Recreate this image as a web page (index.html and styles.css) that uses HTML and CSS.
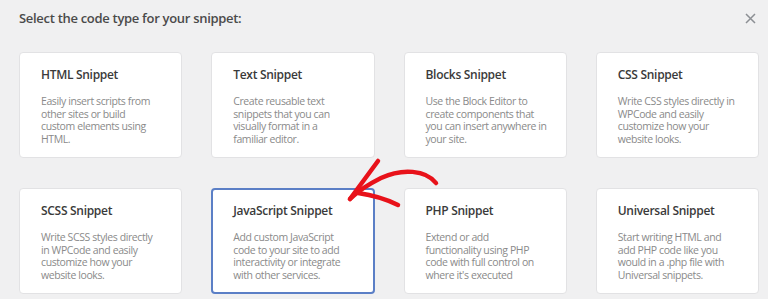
FILE: index.html
```html
<!DOCTYPE html>
<html lang="en">
<head>
  <meta charset="UTF-8">
  <title>Select snippet type</title>
  <link rel="stylesheet" href="styles.css">
</head>
<body>

<div class="modal">
  <div class="modal-header">
    <h2>Select the code type for your snippet:</h2>
    <button class="close" aria-label="Close">
      <svg width="11" height="11" viewBox="0 0 11 11"><path d="M1 1L10 10M10 1L1 10" stroke="#8c8f94" stroke-width="1.5" fill="none"/></svg>
    </button>
  </div>

  <div class="types">
    <div class="type">
      <h3>HTML Snippet</h3>
      <p>Easily insert scripts from<br>other sites or build<br>custom elements using<br>HTML.</p>
    </div>
    <div class="type">
      <h3>Text Snippet</h3>
      <p>Create reusable text<br>snippets that you can<br>visually format in a<br>familiar editor.</p>
    </div>
    <div class="type">
      <h3>Blocks Snippet</h3>
      <p>Use the Block Editor to<br>create components that<br>you can insert anywhere in<br>your site.</p>
    </div>
    <div class="type">
      <h3>CSS Snippet</h3>
      <p>Write CSS styles directly in<br>WPCode and easily<br>customize how your<br>website looks.</p>
    </div>

    <div class="type">
      <h3>SCSS Snippet</h3>
      <p>Write SCSS styles directly<br>in WPCode and easily<br>customize how your<br>website looks.</p>
    </div>
    <div class="type selected">
      <h3>JavaScript Snippet</h3>
      <p>Add custom JavaScript<br>code to your site to add<br>interactivity or integrate<br>with other services.</p>
    </div>
    <div class="type">
      <h3>PHP Snippet</h3>
      <p>Extend or add<br>functionality using PHP<br>code with full control on<br>where it's executed</p>
    </div>
    <div class="type">
      <h3>Universal Snippet</h3>
      <p>Start writing HTML and<br>add PHP code like you<br>would in a .php file with<br>Universal snippets.</p>
    </div>
  </div>

  <!-- hand drawn arrow pointing at the JavaScript card -->
  <svg class="arrow" width="768" height="299" viewBox="0 0 768 299">
    <g stroke="#e8121a" stroke-width="4.5" stroke-linecap="round" fill="none">
      <path d="M436 183 C426 170 402 168 381 178 C369 184 358 191 350 199"/>
      <path d="M350 199 L378 161"/>
      <path d="M358 193 C372 195 386 199 398 205"/>
    </g>
  </svg>
</div>

</body>
</html>
```

FILE: styles.css
```css
body {
  margin: 0;
  background-color: #f0f0f1;
  font-family: "Open Sans", Arial, sans-serif;
  color: #3c434a;
}

.modal {
  position: relative;
  width: 768px;
  height: 299px;
  overflow: hidden;
}

.modal-header {
  display: flex;
  justify-content: space-between;
  align-items: center;
  padding: 8px 12px 0 19px;
  height: 20px;
}

.modal-header h2 {
  margin: 0;
  font-size: 13px;
  font-weight: 600;
  letter-spacing: -0.3px;
  color: #4a4a4a;
}

.close {
  background: none;
  border: none;
  padding: 0;
  cursor: pointer;
  display: flex;
}

.types {
  display: grid;
  grid-template-columns: repeat(4, 1fr);
  column-gap: 29px;
  row-gap: 30px;
  width: 740px;
  margin: 24px 0 0 19px;
}

.type {
  background-color: #fff;
  border: 1px solid #e2e2e4;
  border-radius: 4px;
  height: 106px;
  box-sizing: border-box;
  padding: 13px 12px 0 21px;
}

.type.selected {
  border: 2px solid #5b7fc6;
  padding: 12px 11px 0 20px;
}

.type h3 {
  margin: 0 0 11px;
  font-size: 12px;
  font-weight: 600;
  line-height: 18px;
  letter-spacing: -0.3px;
  color: #3a3a3a;
}

.type p {
  margin: 0;
  font-size: 10.5px;
  line-height: 12.5px;
  letter-spacing: -0.4px;
  white-space: nowrap;
  color: #8a8a8a;
}

.arrow {
  position: absolute;
  left: 0;
  top: 0;
  pointer-events: none;
}
```
